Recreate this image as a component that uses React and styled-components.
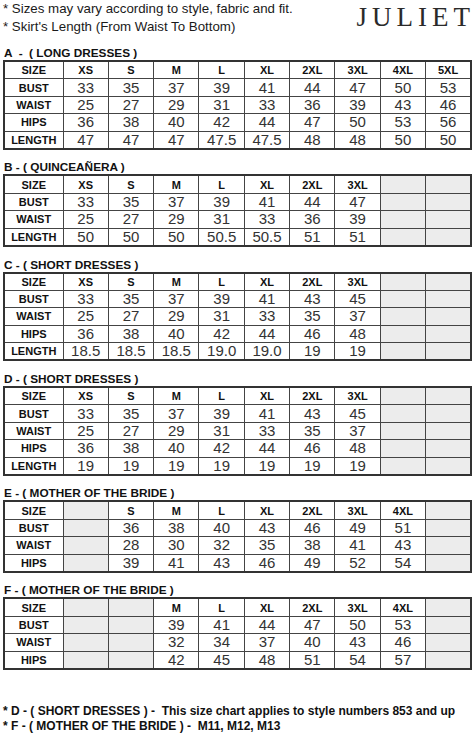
import React from "react";
import styled, { createGlobalStyle } from "styled-components";

const GlobalStyle = createGlobalStyle`
  html, body {
    margin: 0;
    padding: 0;
    background: #fff;
  }
  body {
    font-family: "Liberation Sans", Arial, sans-serif;
    color: #222;
  }
`;

const sections = [
  {
    title: "A  -  ( LONG DRESSES )",
    rows: [
      ["SIZE", "XS", "S", "M", "L", "XL", "2XL", "3XL", "4XL", "5XL"],
      ["BUST", "33", "35", "37", "39", "41", "44", "47", "50", "53"],
      ["WAIST", "25", "27", "29", "31", "33", "36", "39", "43", "46"],
      ["HIPS", "36", "38", "40", "42", "44", "47", "50", "53", "56"],
      ["LENGTH", "47", "47", "47", "47.5", "47.5", "48", "48", "50", "50"],
    ],
  },
  {
    title: "B - ( QUINCEAÑERA )",
    rows: [
      ["SIZE", "XS", "S", "M", "L", "XL", "2XL", "3XL", null, null],
      ["BUST", "33", "35", "37", "39", "41", "44", "47", null, null],
      ["WAIST", "25", "27", "29", "31", "33", "36", "39", null, null],
      ["LENGTH", "50", "50", "50", "50.5", "50.5", "51", "51", null, null],
    ],
  },
  {
    title: "C - ( SHORT DRESSES )",
    rows: [
      ["SIZE", "XS", "S", "M", "L", "XL", "2XL", "3XL", null, null],
      ["BUST", "33", "35", "37", "39", "41", "43", "45", null, null],
      ["WAIST", "25", "27", "29", "31", "33", "35", "37", null, null],
      ["HIPS", "36", "38", "40", "42", "44", "46", "48", null, null],
      ["LENGTH", "18.5", "18.5", "18.5", "19.0", "19.0", "19", "19", null, null],
    ],
  },
  {
    title: "D - ( SHORT DRESSES )",
    rows: [
      ["SIZE", "XS", "S", "M", "L", "XL", "2XL", "3XL", null, null],
      ["BUST", "33", "35", "37", "39", "41", "43", "45", null, null],
      ["WAIST", "25", "27", "29", "31", "33", "35", "37", null, null],
      ["HIPS", "36", "38", "40", "42", "44", "46", "48", null, null],
      ["LENGTH", "19", "19", "19", "19", "19", "19", "19", null, null],
    ],
  },
  {
    title: "E - ( MOTHER OF THE BRIDE )",
    rows: [
      ["SIZE", null, "S", "M", "L", "XL", "2XL", "3XL", "4XL", null],
      ["BUST", null, "36", "38", "40", "43", "46", "49", "51", null],
      ["WAIST", null, "28", "30", "32", "35", "38", "41", "43", null],
      ["HIPS", null, "39", "41", "43", "46", "49", "52", "54", null],
    ],
  },
  {
    title: "F - ( MOTHER OF THE BRIDE )",
    rows: [
      ["SIZE", null, null, "M", "L", "XL", "2XL", "3XL", "4XL", null],
      ["BUST", null, null, "39", "41", "44", "47", "50", "53", null],
      ["WAIST", null, null, "32", "34", "37", "40", "43", "46", null],
      ["HIPS", null, null, "42", "45", "48", "51", "54", "57", null],
    ],
  },
];

const SizeChart = () => {
  return (
    <Page>
      <GlobalStyle />
      <Header>
        <Notes>
          <Note>* Sizes may vary according to style, fabric and fit.</Note>
          <Note>* Skirt's Length (From Waist To Bottom)</Note>
        </Notes>
        <Logo>JULIET</Logo>
      </Header>

      {sections.map((section, s) => (
        <Section key={section.title} $first={s === 0}>
          <Title>{section.title}</Title>
          <Table>
            <colgroup>
              <col style={{ width: 59 }} />
              {section.rows[0].slice(1).map((_, i) => (
                <col key={i} />
              ))}
            </colgroup>
            <tbody>
              {section.rows.map((row, r) => (
                <tr key={r}>
                  {row.map((value, c) => (
                    <Cell
                      key={c}
                      $bold={r === 0 || c === 0}
                      $empty={value === null}
                    >
                      {value}
                    </Cell>
                  ))}
                </tr>
              ))}
            </tbody>
          </Table>
        </Section>
      ))}

      <Footer>
        <FootNote>* D - ( SHORT DRESSES ) -&nbsp; This size chart applies to style numbers 853 and up</FootNote>
        <FootNote>* F - ( MOTHER OF THE BRIDE ) -&nbsp; M11, M12, M13</FootNote>
      </Footer>
    </Page>
  );
};

const Page = styled.div`
  width: 474px;
  height: 733px;
  box-sizing: border-box;
  padding: 0 2px 0 3px;
  overflow: hidden;
`;

const Header = styled.div`
  display: flex;
  justify-content: space-between;
  align-items: flex-start;
  height: 44px;
`;

const Notes = styled.div`
  display: flex;
  flex-direction: column;
  gap: 4px;
  padding-top: 2px;
`;

const Note = styled.div`
  font-size: 13.3px;
  line-height: 14px;
  color: #1a1a1a;
`;

const Logo = styled.div`
  font-family: "Liberation Serif", "Times New Roman", serif;
  font-size: 27px;
  line-height: 30px;
  letter-spacing: 5px;
  color: #2a2a2a;
  padding-top: 2px;
  margin-right: -3px;
`;

const Section = styled.div`
  margin-top: ${(p) => (p.$first ? "2px" : "10.5px")};
`;

const Title = styled.div`
  font-size: 11.8px;
  font-weight: bold;
  line-height: 14px;
  color: #111;
  white-space: pre;
  padding-left: 1px;
`;

const Table = styled.table`
  width: 469px;
  table-layout: fixed;
  border-collapse: collapse;
  border: 2px solid #333;
`;

const Cell = styled.td`
  height: 16.4px;
  padding: 0;
  border: 1px solid #444;
  text-align: center;
  vertical-align: middle;
  line-height: 16px;
  background: ${(p) => (p.$empty ? "#ececec" : "#fff")};
  font-size: ${(p) => (p.$bold ? "11px" : "15px")};
  font-weight: ${(p) => (p.$bold ? "bold" : "normal")};
  color: ${(p) => (p.$bold ? "#111" : "#333")};
`;

const Footer = styled.div`
  margin-top: 35px;
  display: flex;
  flex-direction: column;
  gap: 2px;
`;

const FootNote = styled.div`
  font-size: 12px;
  font-weight: bold;
  line-height: 13px;
  color: #111;
  white-space: nowrap;
`;

export default SizeChart;
